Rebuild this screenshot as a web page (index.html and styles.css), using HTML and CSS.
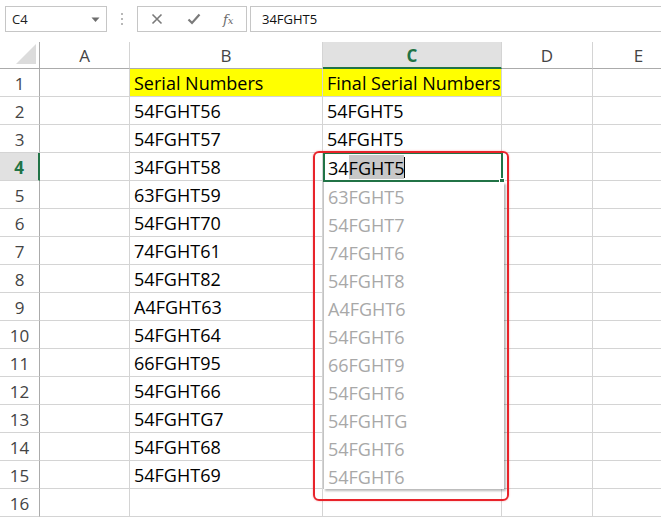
FILE: index.html
```html
<!DOCTYPE html>
<html>
<head>
<meta charset="utf-8">
<link rel="stylesheet" href="styles.css">
</head>
<body>
<div class="page">
  <div class="toolbar">
    <div class="namebox"><span class="name">C4</span>
      <svg class="caret" width="9" height="6" viewBox="0 0 9 6"><path d="M0.5 0.5 H8.5 L4.5 5 Z" fill="#6d6d6d"/></svg>
    </div>
    <div class="dots">
      <svg width="4" height="14" viewBox="0 0 4 14"><rect x="1" y="1" width="2" height="2" fill="#b8b8b8"/><rect x="1" y="6" width="2" height="2" fill="#b8b8b8"/><rect x="1" y="11" width="2" height="2" fill="#b8b8b8"/></svg>
    </div>
    <div class="fxbox">
      <svg class="ico" width="12" height="12" viewBox="0 0 12 12"><path d="M1.5 1.5 L10.5 10.5 M10.5 1.5 L1.5 10.5" stroke="#7a7a7a" stroke-width="1.6" fill="none"/></svg>
      <svg class="ico" width="14" height="12" viewBox="0 0 14 12"><path d="M1.5 6.5 L5 10 L12.5 1.5" stroke="#7a7a7a" stroke-width="2.2" fill="none"/></svg>
      <span class="fx">f<span class="fxx">x</span></span>
    </div>
    <div class="formula">34FGHT5</div>
  </div>

  <div class="sheet">
    <div class="ch corner"><div class="tri"></div></div>
    <div class="ch">A</div>
    <div class="ch">B</div>
    <div class="ch sel">C</div>
    <div class="ch">D</div>
    <div class="ch">E</div>

    <div class="rh">1</div><div class="c"></div><div class="c yel">Serial Numbers</div><div class="c yel">Final Serial Numbers</div><div class="c"></div><div class="c"></div>
    <div class="rh">2</div><div class="c"></div><div class="c">54FGHT56</div><div class="c">54FGHT5</div><div class="c"></div><div class="c"></div>
    <div class="rh">3</div><div class="c"></div><div class="c">54FGHT57</div><div class="c">54FGHT5</div><div class="c"></div><div class="c"></div>
    <div class="rh rsel">4</div><div class="c"></div><div class="c">34FGHT58</div><div class="c"></div><div class="c"></div><div class="c"></div>
    <div class="rh">5</div><div class="c"></div><div class="c">63FGHT59</div><div class="c"></div><div class="c"></div><div class="c"></div>
    <div class="rh">6</div><div class="c"></div><div class="c">54FGHT70</div><div class="c"></div><div class="c"></div><div class="c"></div>
    <div class="rh">7</div><div class="c"></div><div class="c">74FGHT61</div><div class="c"></div><div class="c"></div><div class="c"></div>
    <div class="rh">8</div><div class="c"></div><div class="c">54FGHT82</div><div class="c"></div><div class="c"></div><div class="c"></div>
    <div class="rh">9</div><div class="c"></div><div class="c">A4FGHT63</div><div class="c"></div><div class="c"></div><div class="c"></div>
    <div class="rh">10</div><div class="c"></div><div class="c">54FGHT64</div><div class="c"></div><div class="c"></div><div class="c"></div>
    <div class="rh">11</div><div class="c"></div><div class="c">66FGHT95</div><div class="c"></div><div class="c"></div><div class="c"></div>
    <div class="rh">12</div><div class="c"></div><div class="c">54FGHT66</div><div class="c"></div><div class="c"></div><div class="c"></div>
    <div class="rh">13</div><div class="c"></div><div class="c">54FGHTG7</div><div class="c"></div><div class="c"></div><div class="c"></div>
    <div class="rh">14</div><div class="c"></div><div class="c">54FGHT68</div><div class="c"></div><div class="c"></div><div class="c"></div>
    <div class="rh">15</div><div class="c"></div><div class="c">54FGHT69</div><div class="c"></div><div class="c"></div><div class="c"></div>
    <div class="rh">16</div><div class="c"></div><div class="c"></div><div class="c"></div><div class="c"></div><div class="c"></div>
  </div>

  <div class="active"><span class="typed">34</span><span class="hl">FGHT5</span><span class="cursor"></span><div class="handle"></div></div>

  <div class="droplist">
    <div class="item">63FGHT5</div>
    <div class="item">54FGHT7</div>
    <div class="item">74FGHT6</div>
    <div class="item">54FGHT8</div>
    <div class="item">A4FGHT6</div>
    <div class="item">54FGHT6</div>
    <div class="item">66FGHT9</div>
    <div class="item">54FGHT6</div>
    <div class="item">54FGHTG</div>
    <div class="item">54FGHT6</div>
    <div class="item">54FGHT6</div>
  </div>

  <div class="redbox"></div>
</div>
</body>
</html>
```

FILE: styles.css
```css
* { box-sizing: border-box; }
html, body { margin: 0; padding: 0; background: #fff; }
body { font-family: "Open Sans", Lato, sans-serif; overflow: hidden; }
.page { position: relative; width: 661px; height: 518px; overflow: hidden; }

.toolbar { height: 42px; display: flex; align-items: flex-start; padding-top: 6px; }
.namebox { margin-left: 5px; width: 102px; height: 26px; border: 1px solid #c6c6c6; display: flex; align-items: center; justify-content: space-between; padding: 0 6px 0 6px; }
.name { font-size: 13px; color: #222; }
.caret { margin-top: 1px; }
.dots { width: 30px; height: 26px; display: flex; align-items: center; justify-content: center; }
.fxbox { width: 110px; height: 26px; border: 1px solid #c6c6c6; display: flex; align-items: center; padding-left: 13px; }
.fxbox .ico:first-child { margin-right: 24px; }
.fxbox .ico:nth-child(2) { margin-right: 22px; }
.fx { font-family: "DejaVu Serif", "Liberation Serif", serif; font-style: italic; font-size: 13px; color: #6a6a6a; }
.fxx { font-size: 10px; }
.formula { flex: 1; margin-left: 3px; margin-right: -2px; height: 26px; border: 1px solid #c6c6c6; font-size: 13px; color: #111; display: flex; align-items: center; padding-left: 11px; }

.sheet { display: grid; width: 685px; grid-template-columns: 40px 90px 193px 179px 91px 92px; grid-template-rows: 27px repeat(16, 28px); }
.ch { border-right: 1px solid #d4d4d4; border-bottom: 1px solid #ababab; font-size: 17px; color: #444; display: flex; align-items: center; justify-content: center; padding-top: 1px; }
.ch.corner { border-right: 1px solid #ababab; justify-content: flex-end; align-items: flex-end; padding: 0 3px 4px 0; }
.tri { width: 0; height: 0; border-left: 20px solid transparent; border-bottom: 20px solid #dcdcdc; }
.ch.sel { background: #e1e1e1; color: #217346; font-weight: bold; border-bottom: 2px solid #217346; }
.rh { border-right: 1px solid #ababab; border-bottom: 1px solid #d4d4d4; font-size: 17px; color: #444; display: flex; align-items: center; justify-content: center; padding-top: 1px; }
.rh.rsel { background: #e1e1e1; color: #217346; font-weight: bold; border-right: 2px solid #217346; }
.c { border-right: 1px solid #d4d4d4; border-bottom: 1px solid #d4d4d4; font-size: 18px; color: #000; display: flex; align-items: center; padding: 1px 0 0 4px; white-space: nowrap; overflow: hidden; }
.c.yel { background: #ffff00; }

.active { position: absolute; left: 323px; top: 152px; width: 180px; height: 30px; border: 2px solid #217346; font-size: 18px; color: #000; display: flex; align-items: stretch; padding: 1px 0 1px 3px; }
.typed, .hl { display: flex; align-items: center; padding-top: 1px; }
.hl { background: #c8c8c8; }
.cursor { width: 1px; background: #000; margin: 2px 0 1px 0; }
.handle { position: absolute; right: -4px; bottom: -4px; width: 6px; height: 6px; background: #217346; border: 1px solid #fff; }

.droplist { position: absolute; left: 323px; top: 182px; width: 181px; height: 307px; background: #fff; border-left: 1px solid #c4c4c4; box-shadow: 2px 2px 2px rgba(0,0,0,0.28); }
.item { height: 28px; font-size: 18px; color: #a8a8a8; display: flex; align-items: center; padding: 1px 0 0 4px; }

.redbox { position: absolute; left: 313px; top: 151px; width: 196px; height: 350px; border: 2px solid #e8232a; border-radius: 6px; box-shadow: 0 0 2px rgba(232,35,42,0.4); }
```
